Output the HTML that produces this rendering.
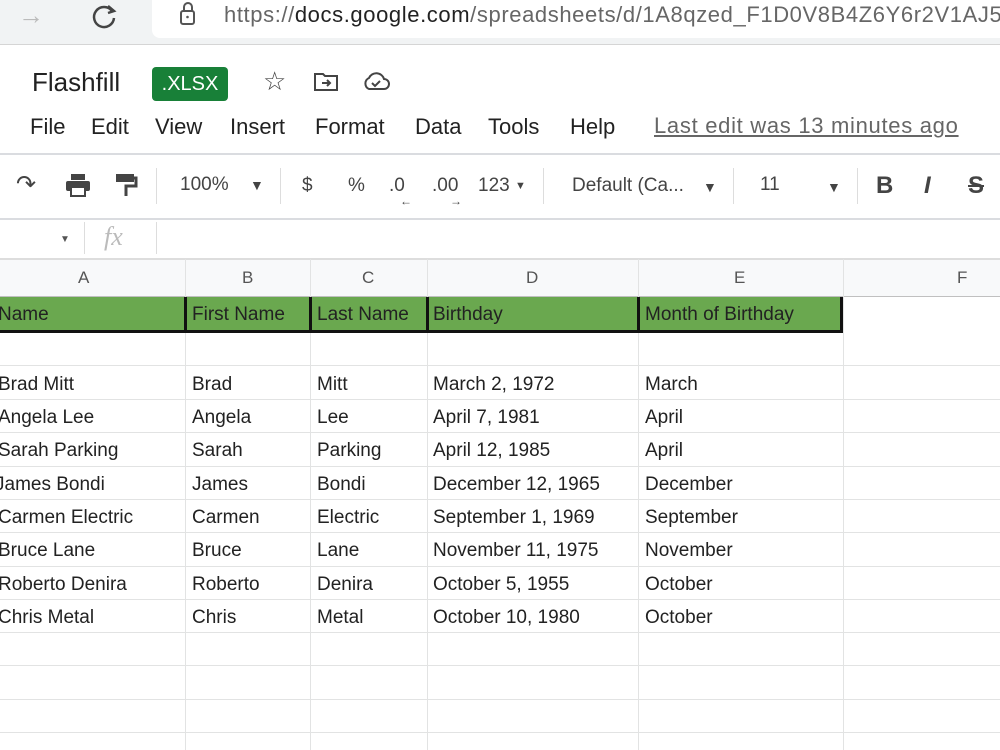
<!DOCTYPE html>
<html><head><style>
*{margin:0;padding:0;box-sizing:border-box}
body{width:1000px;height:750px;overflow:hidden;background:#fff;font-family:"Liberation Sans",sans-serif;position:relative;color:#222}
.a{position:absolute;white-space:nowrap}
.t{position:absolute;font-size:19px;color:#222;white-space:nowrap}
.m{position:absolute;top:114px;font-size:22px;color:#222}
.tb{position:absolute;top:175px;font-size:19px;color:#444}
.vl{position:absolute;width:1px;background:#e2e3e3}
.hl{position:absolute;height:1px;background:#e2e3e3;left:0;width:1000px}
</style></head><body>
<div class="a" style="left:0;top:0;width:1000px;height:45px;background:#f1f3f4;border-bottom:1px solid #d5d5d5"></div>
<div class="a" style="left:152px;top:0;width:848px;height:38px;background:#fff;border-radius:0 0 0 8px"></div>
<div class="a" style="left:18px;top:0px;font-size:26px;color:#bbb">→</div>
<svg class="a" style="left:90px;top:2px" width="30" height="28" viewBox="0 0 30 28"><path d="M22 9 A10 10 0 1 0 24 16" fill="none" stroke="#444" stroke-width="2.5"/><path d="M18 4 L24 9 L18 11" fill="none" stroke="#444" stroke-width="2.5"/></svg>
<svg class="a" style="left:178px;top:2px" width="20" height="24" viewBox="0 0 20 24"><rect x="3" y="9" width="13" height="13" rx="2" fill="none" stroke="#555" stroke-width="2"/><path d="M6 9V5a4 4 0 0 1 8 0v4" fill="none" stroke="#555" stroke-width="2"/><circle cx="9.5" cy="15" r="1.3" fill="#555"/></svg>
<div class="a" style="left:224px;top:2px;font-size:22px;color:#666;letter-spacing:0.6px">https://<span style="color:#222">docs.google.com</span>/spreadsheets/d/1A8qzed_F1D0V8B4Z6Y6r2V1AJ52</div>

<div class="a" style="left:32px;top:67px;font-size:26px;color:#222">Flashfill</div>
<div class="a" style="left:152px;top:67px;width:76px;height:34px;background:#188038;border-radius:4px;color:#fff;font-size:20px;line-height:34px;text-align:center">.XLSX</div>
<div class="a" style="left:263px;top:66px;font-size:26px;color:#444">☆</div>
<svg class="a" style="left:313px;top:71px" width="26" height="22" viewBox="0 0 26 22"><path d="M2 3h8l2 2h12v14H2z" fill="none" stroke="#444" stroke-width="2"/><path d="M9 12h8M14 9l3 3-3 3" fill="none" stroke="#444" stroke-width="2"/></svg>
<svg class="a" style="left:362px;top:71px" width="28" height="22" viewBox="0 0 28 22"><path d="M7 18h15a5 5 0 0 0 0-10 8 8 0 0 0-15-1 6 6 0 0 0 0 11z" fill="none" stroke="#444" stroke-width="2"/><path d="M10 12l3 3 5-5" fill="none" stroke="#444" stroke-width="2"/></svg>
<div class="m" style="left:30px">File</div>
<div class="m" style="left:91px">Edit</div>
<div class="m" style="left:155px">View</div>
<div class="m" style="left:230px">Insert</div>
<div class="m" style="left:315px">Format</div>
<div class="m" style="left:415px">Data</div>
<div class="m" style="left:488px">Tools</div>
<div class="m" style="left:570px">Help</div>
<div class="a" style="left:654px;top:113px;font-size:22px;color:#666;text-decoration:underline;letter-spacing:0.7px">Last edit was 13 minutes ago</div>
<div class="hl" style="top:153px;height:2px;background:#dadce0"></div>

<div class="a" style="left:16px;top:170px;font-size:24px;color:#444">↷</div>
<svg class="a" style="left:64px;top:172px" width="28" height="26" viewBox="0 0 28 26"><rect x="7" y="2" width="14" height="6" fill="#444"/><rect x="2" y="9" width="24" height="10" rx="2" fill="#444"/><rect x="7" y="15" width="14" height="9" fill="#fff" stroke="#444" stroke-width="2"/></svg>
<svg class="a" style="left:114px;top:172px" width="24" height="26" viewBox="0 0 24 26"><rect x="2" y="2" width="18" height="8" fill="#444"/><path d="M20 6h2v8h-10v10" fill="none" stroke="#444" stroke-width="3"/></svg>
<div class="vl" style="left:156px;top:168px;height:36px;background:#ddd"></div>
<div class="tb" style="left:180px;top:174px">100%</div>
<div class="a" style="left:250px;top:177px;font-size:14px;color:#444">▼</div>
<div class="vl" style="left:280px;top:168px;height:36px;background:#ddd"></div>
<div class="tb" style="left:302px">$</div>
<div class="tb" style="left:348px">%</div>
<div class="tb" style="left:389px">.0</div>
<div class="tb" style="left:432px">.00</div>
<div class="tb" style="left:478px">123</div>
<div class="a" style="left:400px;top:194px;font-size:12px;color:#444">←</div>
<div class="a" style="left:450px;top:194px;font-size:12px;color:#444">→</div>
<div class="a" style="left:515px;top:180px;font-size:11px;color:#444">▼</div>
<div class="vl" style="left:543px;top:168px;height:36px;background:#ddd"></div>
<div class="tb" style="left:572px">Default (Ca...</div>
<div class="a" style="left:703px;top:179px;font-size:14px;color:#444">▼</div>
<div class="vl" style="left:733px;top:168px;height:36px;background:#ddd"></div>
<div class="tb" style="left:760px;top:174px">11</div>
<div class="a" style="left:827px;top:179px;font-size:14px;color:#444">▼</div>
<div class="vl" style="left:857px;top:168px;height:36px;background:#ddd"></div>
<div class="a" style="left:876px;top:172px;font-size:24px;font-weight:bold;color:#444">B</div>
<div class="a" style="left:924px;top:172px;font-size:24px;font-style:italic;font-weight:bold;color:#444">I</div>
<div class="a" style="left:968px;top:172px;font-size:24px;text-decoration:line-through;font-weight:bold;color:#444">S</div>
<div class="hl" style="top:218px;height:2px;background:#dadce0"></div>
<div class="a" style="left:60px;top:234px;font-size:10px;color:#555">▼</div>
<div class="vl" style="left:84px;top:222px;height:32px;background:#ddd"></div>
<div class="a" style="left:104px;top:222px;font-size:26px;font-style:italic;font-family:'Liberation Serif',serif;color:#bbb">fx</div>
<div class="vl" style="left:156px;top:222px;height:32px;background:#ddd"></div>

<div class="a" style="left:0;top:258px;width:1000px;height:39px;background:#f8f9fa;border-top:2px solid #ddd;border-bottom:1px solid #c0c0c0"></div>
<div class="a" style="left:0;top:268px;width:1000px;font-size:17px;color:#555">
<span class="a" style="left:78px">A</span><span class="a" style="left:242px">B</span><span class="a" style="left:362px">C</span><span class="a" style="left:526px">D</span><span class="a" style="left:734px">E</span><span class="a" style="left:957px">F</span></div>

<div class="vl" style="left:185px;top:259px;height:491px"></div>
<div class="vl" style="left:310px;top:259px;height:491px"></div>
<div class="vl" style="left:427px;top:259px;height:491px"></div>
<div class="vl" style="left:638px;top:259px;height:491px"></div>
<div class="vl" style="left:843px;top:259px;height:491px"></div>
<div class="hl" style="top:365px"></div><div class="hl" style="top:399px"></div><div class="hl" style="top:432px"></div><div class="hl" style="top:466px"></div><div class="hl" style="top:499px"></div><div class="hl" style="top:532px"></div><div class="hl" style="top:566px"></div><div class="hl" style="top:599px"></div><div class="hl" style="top:632px"></div><div class="hl" style="top:665px"></div><div class="hl" style="top:699px"></div><div class="hl" style="top:732px"></div>

<div class="a" style="left:0;top:297px;width:843px;height:36px;background:#6aa84f;border-bottom:3px solid #111;border-right:3px solid #111"></div>
<div class="a" style="left:184px;top:297px;width:3px;height:36px;background:#111"></div>
<div class="a" style="left:309px;top:297px;width:3px;height:36px;background:#111"></div>
<div class="a" style="left:426px;top:297px;width:3px;height:36px;background:#111"></div>
<div class="a" style="left:637px;top:297px;width:3px;height:36px;background:#111"></div>
<div class="t" style="left:-2px;top:304px">Name</div>
<div class="t" style="left:192px;top:304px">First Name</div>
<div class="t" style="left:317px;top:304px">Last Name</div>
<div class="t" style="left:433px;top:304px">Birthday</div>
<div class="t" style="left:645px;top:304px">Month of Birthday</div>

<div class="t" style="left:-2px;top:374px">Brad Mitt</div><div class="t" style="left:192px;top:374px">Brad</div><div class="t" style="left:317px;top:374px">Mitt</div><div class="t" style="left:433px;top:374px">March 2, 1972</div><div class="t" style="left:645px;top:374px">March</div>
<div class="t" style="left:-2px;top:407px">Angela Lee</div><div class="t" style="left:192px;top:407px">Angela</div><div class="t" style="left:317px;top:407px">Lee</div><div class="t" style="left:433px;top:407px">April 7, 1981</div><div class="t" style="left:645px;top:407px">April</div>
<div class="t" style="left:-2px;top:440px">Sarah Parking</div><div class="t" style="left:192px;top:440px">Sarah</div><div class="t" style="left:317px;top:440px">Parking</div><div class="t" style="left:433px;top:440px">April 12, 1985</div><div class="t" style="left:645px;top:440px">April</div>
<div class="t" style="left:-5px;top:474px">James Bondi</div><div class="t" style="left:192px;top:474px">James</div><div class="t" style="left:317px;top:474px">Bondi</div><div class="t" style="left:433px;top:474px">December 12, 1965</div><div class="t" style="left:645px;top:474px">December</div>
<div class="t" style="left:-2px;top:507px">Carmen Electric</div><div class="t" style="left:192px;top:507px">Carmen</div><div class="t" style="left:317px;top:507px">Electric</div><div class="t" style="left:433px;top:507px">September 1, 1969</div><div class="t" style="left:645px;top:507px">September</div>
<div class="t" style="left:-2px;top:540px">Bruce Lane</div><div class="t" style="left:192px;top:540px">Bruce</div><div class="t" style="left:317px;top:540px">Lane</div><div class="t" style="left:433px;top:540px">November 11, 1975</div><div class="t" style="left:645px;top:540px">November</div>
<div class="t" style="left:-2px;top:574px">Roberto Denira</div><div class="t" style="left:192px;top:574px">Roberto</div><div class="t" style="left:317px;top:574px">Denira</div><div class="t" style="left:433px;top:574px">October 5, 1955</div><div class="t" style="left:645px;top:574px">October</div>
<div class="t" style="left:-2px;top:607px">Chris Metal</div><div class="t" style="left:192px;top:607px">Chris</div><div class="t" style="left:317px;top:607px">Metal</div><div class="t" style="left:433px;top:607px">October 10, 1980</div><div class="t" style="left:645px;top:607px">October</div>
</body></html>
